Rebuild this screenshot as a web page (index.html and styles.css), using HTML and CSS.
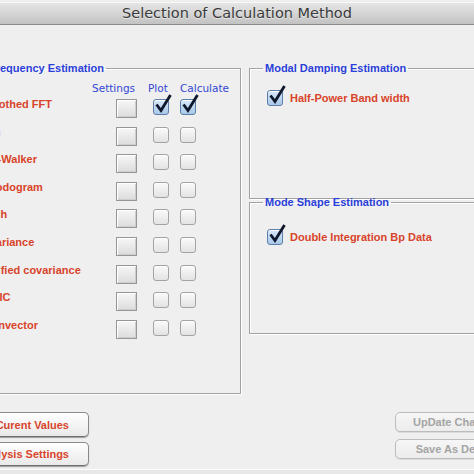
FILE: index.html
```html
<!DOCTYPE html>
<html>
<head>
<meta charset="utf-8">
<title>Selection of Calculation Method</title>
<link rel="stylesheet" href="styles.css">
</head>
<body>
<div class="window">
  <header class="titlebar">Selection of Calculation Method</header>
  <main class="content">
    <div class="panels">
      <fieldset class="group group-freq">
        <legend>Frequency Estimation</legend>
        <div class="col-heads"><span class="h-settings">Settings</span><span class="h-plot">Plot</span><span>Calculate</span></div>
        <div class="rows">
          <div class="row"><span class="label">Smoothed FFT</span><span class="setbox"></span><span class="cb checked plot"><svg viewBox="0 0 18 20"><path d="M2.5 10.5 L7 16.5 L16.5 1"/></svg></span><span class="cb checked calc"><svg viewBox="0 0 18 20"><path d="M2.5 10.5 L7 16.5 L16.5 1"/></svg></span></div>
          <div class="row"><span class="label">Burg</span><span class="setbox"></span><span class="cb plot"></span><span class="cb calc"></span></div>
          <div class="row"><span class="label">Yule-Walker</span><span class="setbox"></span><span class="cb plot"></span><span class="cb calc"></span></div>
          <div class="row"><span class="label">Periodogram</span><span class="setbox"></span><span class="cb plot"></span><span class="cb calc"></span></div>
          <div class="row"><span class="label">Welch</span><span class="setbox"></span><span class="cb plot"></span><span class="cb calc"></span></div>
          <div class="row"><span class="label">Covariance</span><span class="setbox"></span><span class="cb plot"></span><span class="cb calc"></span></div>
          <div class="row"><span class="label">Modified covariance</span><span class="setbox"></span><span class="cb plot"></span><span class="cb calc"></span></div>
          <div class="row"><span class="label">MUSIC</span><span class="setbox"></span><span class="cb plot"></span><span class="cb calc"></span></div>
          <div class="row"><span class="label">Eigenvector</span><span class="setbox"></span><span class="cb plot"></span><span class="cb calc"></span></div>
        </div>
      </fieldset>
      <div class="right-col">
        <fieldset class="group group-damp">
          <legend>Modal Damping Estimation</legend>
          <div class="opt"><span class="cb checked"><svg viewBox="0 0 18 20"><path d="M2.5 10.5 L7 16.5 L16.5 1"/></svg></span><span class="opt-text">Half-Power Band width</span></div>
        </fieldset>
        <fieldset class="group group-shape">
          <legend>Mode Shape Estimation</legend>
          <div class="opt"><span class="cb checked"><svg viewBox="0 0 18 20"><path d="M2.5 10.5 L7 16.5 L16.5 1"/></svg></span><span class="opt-text">Double Integration Bp Data</span></div>
        </fieldset>
      </div>
    </div>
    <div class="buttons">
      <div class="btn-col btn-left">
        <button class="btn btn-tall">Load Curent Values</button>
        <button class="btn btn-mid">Analysis Settings</button>
      </div>
      <div class="btn-col btn-right">
        <button class="btn btn-off" disabled>UpDate Changes</button>
        <button class="btn btn-off" disabled>Save As Default</button>
      </div>
    </div>
  </main>
  <div class="footer"></div>
</div>
</body>
</html>
```
FILE: styles.css
```css
html, body {
  margin: 0;
  padding: 0;
  width: 474px;
  height: 474px;
  overflow: hidden;
  background: #efefef;
}

.window {
  width: 474px;
  height: 474px;
  overflow: hidden;
  background: #efefef;
  font-family: "Liberation Sans", Arial, sans-serif;
}

.titlebar {
  height: 22px;
  line-height: 22px;
  border-top: 2px solid #eef0ee;
  border-bottom: 1px solid #8a8a8a;
  background: linear-gradient(#e6e6e6 0%, #d8d8d8 45%, #c2c2c2 100%);
  box-shadow: inset 0 1px 0 #f8f8f8;
  text-align: center;
  font-family: "DejaVu Sans", "Liberation Sans", sans-serif;
  font-size: 14.5px;
  color: #3a3a3a;
  text-shadow: 0 1px 0 rgba(255, 255, 255, 0.5);
}

.content {
  padding-top: 37px;
}

.panels {
  display: flex;
  align-items: flex-start;
  margin-left: -37px;
  gap: 8px;
}

.group {
  margin: 0;
  min-width: 0;
  border: 1px solid #a2a2a2;
  box-shadow: 1px 1px 0 #ffffff, inset 1px 1px 0 #ffffff;
  flex: none;
}

.group legend {
  padding: 0 2px;
  margin-left: 0;
  font-size: 11px;
  line-height: 13px;
  font-weight: bold;
  color: #2b3fd8;
  white-space: nowrap;
}

.group-freq {
  width: 278px;
  box-sizing: border-box;
  padding: 6.5px 0 46px 11px;
}

.group-freq legend {
  margin-left: 12px;
}

.col-heads {
  display: flex;
  padding-left: 117px;
  margin-bottom: 4.5px;
  font-family: "DejaVu Sans", "Liberation Sans", sans-serif;
  font-size: 10.5px;
  line-height: 13px;
  color: #3347d2;
  white-space: nowrap;
}

.h-settings { width: 56px; flex: none; }
.h-plot { width: 32px; flex: none; }

.row {
  display: flex;
  align-items: flex-start;
  height: 27.6px;
}

.label {
  width: 141px;
  flex: none;
  margin-top: -1px;
  font-size: 11px;
  line-height: 13px;
  font-weight: bold;
  color: #d8442a;
  white-space: nowrap;
  overflow: hidden;
}

.setbox {
  width: 21px;
  height: 19px;
  box-sizing: border-box;
  flex: none;
  border: 1px solid #969696;
  background: linear-gradient(#f7f7f7, #dcdcdc);
  box-shadow: inset 1px 1px 0 #ffffff, inset -1px -1px 0 #cecece;
}

.cb {
  position: relative;
  width: 16px;
  height: 16px;
  box-sizing: border-box;
  flex: none;
  border: 1px solid #a3a3a3;
  border-radius: 3px;
  background: linear-gradient(#fafafa, #e3e3e3);
  box-shadow: inset 0 1px 0 #ffffff;
}

.cb.plot { margin-left: 16px; }
.cb.calc { margin-left: 11px; }

.cb.checked {
  border-color: #5d7ea6;
  background: linear-gradient(#d8e8f8, #a9c8e8);
}

.cb svg {
  position: absolute;
  left: 0px;
  top: -6px;
  width: 18px;
  height: 20px;
  overflow: visible;
}

.cb svg path {
  fill: none;
  stroke: #10182e;
  stroke-width: 2.8;
  stroke-linejoin: miter;
  stroke-linecap: butt;
}

.right-col {
  display: flex;
  flex-direction: column;
  flex: none;
  width: 232px;
}

.group-damp {
  padding: 15px 0 92px 13px;
}

.group-shape {
  margin-top: -3px;
  padding: 20px 0 88px 13px;
}

.opt {
  display: flex;
  align-items: center;
  height: 16px;
  padding-left: 4px;
  gap: 7px;
}

.opt-text {
  font-size: 11px;
  line-height: 13px;
  font-weight: bold;
  color: #d8442a;
  white-space: nowrap;
}

.buttons {
  display: flex;
  align-items: flex-start;
  margin-top: 18px;
}

.btn-col {
  display: flex;
  flex-direction: column;
  flex: none;
}

.btn-left {
  width: 149px;
  margin-left: -60px;
  gap: 5px;
}

.btn-right {
  width: 124px;
  margin-left: 306px;
  gap: 7px;
}

.btn {
  margin: 0;
  padding: 0;
  box-sizing: border-box;
  font-family: "Liberation Sans", Arial, sans-serif;
  font-size: 11px;
  font-weight: bold;
  white-space: nowrap;
  border-radius: 5px;
}

.btn-left .btn {
  text-align: right;
  padding-right: 19px;
  color: #d8442a;
  border: 1px solid #8a8a8a;
  border-bottom-color: #6e6e6e;
  background: linear-gradient(#ffffff, #f4f4f4 50%, #e9e9e9);
  box-shadow: 0 1px 1px rgba(0, 0, 0, 0.35);
}

.btn-tall { height: 25px; }
.btn-mid { height: 24px; }

.btn-off {
  height: 20px;
  text-align: center;
  color: #a4a4a4;
  border: 1px solid #bcbcbc;
  background: linear-gradient(#f6f6f6, #ececec);
  box-shadow: 0 1px 0 rgba(0, 0, 0, 0.08);
}

.footer {
  margin-top: 3px;
  height: 10px;
  border-top: 1px solid #fbfbfb;
  background: #e8e8e8;
}
```
